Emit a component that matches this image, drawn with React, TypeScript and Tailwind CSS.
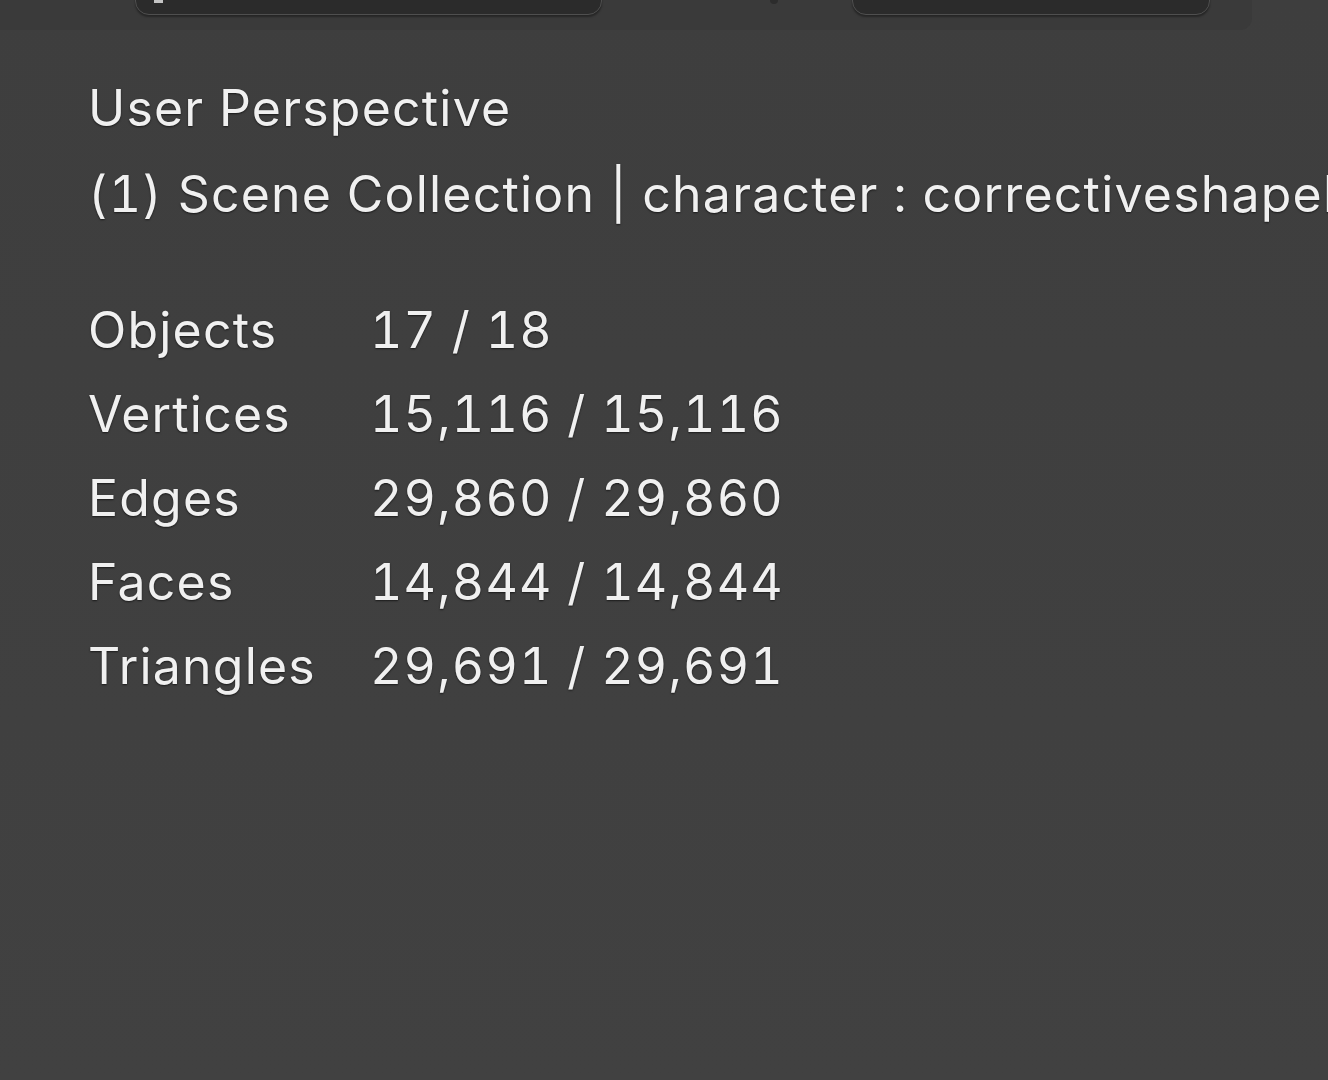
export default function App() {
  const stats = [
    ["Objects", "17 / 18"],
    ["Vertices", "15,116 / 15,116"],
    ["Edges", "29,860 / 29,860"],
    ["Faces", "14,844 / 14,844"],
    ["Triangles", "29,691 / 29,691"],
  ];

  return (
    <div
      className="h-[1080px] w-[1328px] overflow-hidden bg-gradient-to-b from-[#3e3e3e] to-[#414141] text-[#f0f0f0]"
      style={{ fontFamily: "Inter, 'Noto Sans', sans-serif" }}
    >
      {/* header strip, cut off by the top edge */}
      <div className="flex h-[30px] w-[1252px] items-start rounded-br-[12px] bg-[#3a3a3a] pl-[135px]">
        <div className="-mt-[12px] flex h-[27px] w-[467px] items-end rounded-b-[14px] border border-[#4f4f4f] bg-[#2b2b2b] pb-[11px] pl-[18px] shadow-[0_2px_2px_rgba(0,0,0,0.35)]">
          <div className="h-[4px] w-[9px] bg-[#c4c4c4]" />
        </div>
        <div className="ml-[168px] -mt-[4px] h-[8px] w-[8px] rounded-full bg-[#2c2c2c]" />
        <div className="ml-[74px] -mt-[12px] h-[27px] w-[358px] rounded-b-[14px] border border-[#4f4f4f] bg-[#2b2b2b] shadow-[0_2px_2px_rgba(0,0,0,0.35)]" />
      </div>

      <div className="pl-[88px] pt-[35px] text-[50px] leading-[86px] tracking-[1.2px] tabular-nums [text-shadow:0_1px_2px_rgba(0,0,0,0.6)]">
        <div className="whitespace-nowrap">User Perspective</div>
        <div className="whitespace-nowrap">
          (1) Scene Collection | character : correctiveshapekeys
        </div>

        <div className="mt-[51px] flex flex-col leading-[84px]">
          {stats.map(([label, value]) => (
            <div key={label} className="flex whitespace-nowrap">
              <span className="w-[282px]">{label}</span>
              <span>{value}</span>
            </div>
          ))}
        </div>
      </div>
    </div>
  );
}
